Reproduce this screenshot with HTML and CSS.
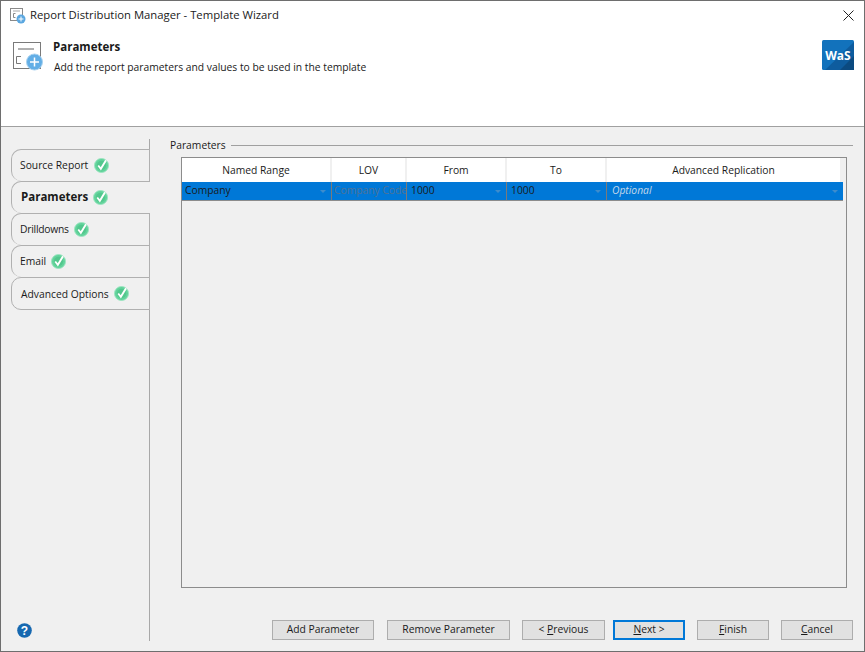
FILE: index.html
```html
<!DOCTYPE html>
<html lang="en">
<head>
<meta charset="utf-8">
<title>Report Distribution Manager - Template Wizard</title>
<link rel="stylesheet" href="styles.css">
</head>
<body>
<div class="window">
  <div class="titlebar">
    <svg class="app-icon" width="16" height="16" viewBox="0 0 16 16">
      <rect x="0.5" y="0.5" width="12" height="12" fill="#fff" stroke="#8a8a8a"/>
      <path d="M3 3h7" stroke="#a8a8a8"/>
      <path d="M5.5 5.5h-2v4h2" fill="none" stroke="#8a8a8a"/>
      <circle cx="11" cy="11" r="4.5" fill="#5ba7e0"/>
      <path d="M11 8.5v5M8.5 11h5" stroke="#fff"/>
    </svg>
    <span class="title">Report Distribution Manager - Template Wizard</span>
    <svg class="close" width="11" height="11" viewBox="0 0 11 11"><path d="M0.5 0.5l10 10M10.500 0.5l-10 10" stroke="#222" stroke-width="1"/></svg>
  </div>
  <div class="header">
    <svg class="head-icon" width="31" height="29" viewBox="0 0 31 29">
      <rect x="0.5" y="0.5" width="27" height="26" fill="#fff" stroke="#7a7a7a"/>
      <path d="M5 7h16" stroke="#b0b0b0" stroke-width="2"/>
      <path d="M8 14.500h-4.500v7h4.500" fill="none" stroke="#777"/>
      <circle cx="21.500" cy="20" r="8" fill="#62aee6" stroke="#a9d2f0"/>
      <path d="M21.500 15.500v9M17 20h9" stroke="#fff" stroke-width="1.500"/>
    </svg>
    <div class="head-text">
      <div class="head-title">Parameters</div>
      <div class="head-sub">Add the report parameters and values to be used in the template</div>
    </div>
    <svg class="logo" width="32" height="30" viewBox="0 0 32 30">
      <rect width="32" height="30" rx="1.500" fill="#1272bc"/>
      <path d="M32 2V30H3Z" fill="#0e5c9e"/>
      <path d="M32 16V30H18Z" fill="#0b4a80"/>
      <text x="16" y="20" class="logo-text" text-anchor="middle">WaS</text>
    </svg>
  </div>
  <div class="main">
    <div class="sidebar">
      <div class="tabs">
        <div class="tab"><span>Source Report</span><svg class="check" viewBox="0 0 16 16"><use href="#ok"/></svg></div>
        <div class="tab active"><span>Parameters</span><svg class="check" viewBox="0 0 16 16"><use href="#ok"/></svg></div>
        <div class="tab"><span>Drilldowns</span><svg class="check" viewBox="0 0 16 16"><use href="#ok"/></svg></div>
        <div class="tab"><span>Email</span><svg class="check" viewBox="0 0 16 16"><use href="#ok"/></svg></div>
        <div class="tab"><span>Advanced Options</span><svg class="check" viewBox="0 0 16 16"><use href="#ok"/></svg></div>
      </div>
      <svg class="help" width="15" height="15" viewBox="0 0 15 15">
        <circle cx="7.500" cy="7.500" r="7.300" fill="#1668b0"/>
        <text x="7.500" y="11.700" class="help-mark" text-anchor="middle">?</text>
      </svg>
    </div>
    <div class="content">
      <div class="legend"><span>Parameters</span><i class="legend-line"></i></div>
      <div class="grid">
        <div class="row head">
          <div class="cell c1">Named Range</div>
          <div class="cell c2">LOV</div>
          <div class="cell c3">From</div>
          <div class="cell c4">To</div>
          <div class="cell c5">Advanced Replication</div>
        </div>
        <div class="row sel">
          <div class="cell c1"><span>Company</span><b class="arrow"></b></div>
          <div class="cell c2 muted"><span>Company Code</span></div>
          <div class="cell c3"><span>1000</span><b class="arrow"></b></div>
          <div class="cell c4"><span>1000</span><b class="arrow"></b></div>
          <div class="cell c5 opt"><span>Optional</span><b class="arrow"></b></div>
        </div>
      </div>
      <div class="buttons">
        <button class="btn b-add">Add Parameter</button>
        <button class="btn b-rem">Remove Parameter</button>
        <button class="btn b-prev">&lt; <u>P</u>revious</button>
        <button class="btn b-next"><u>N</u>ext &gt;</button>
        <button class="btn b-fin"><u>F</u>inish</button>
        <button class="btn b-can"><u>C</u>ancel</button>
      </div>
    </div>
  </div>
</div>
<svg class="defs" width="0" height="0">
  <defs>
    <g id="ok">
      <circle cx="8" cy="8" r="7.500" fill="#62d39b" stroke="#9be4c0"/>
      <circle cx="8" cy="8" r="5" fill="#52c78d"/>
      <path d="M4.500 8l2.800 3.500L12.800 2.500" fill="none" stroke="#fff" stroke-width="2"/>
    </g>
  </defs>
</svg>
</body>
</html>
```
FILE: styles.css
```css
* { box-sizing: border-box; }
html, body { margin: 0; padding: 0; }
body {
  width: 865px;
  height: 652px;
  overflow: hidden;
  font-family: "Open Sans", "Noto Sans", sans-serif;
  font-size: 10.3px;
  color: #1a1a1a;
}
.defs { position: absolute; }
.window {
  width: 865px;
  height: 652px;
  border: 1px solid #6e6e6e;
  background: #f0f0f0;
  display: flex;
  flex-direction: column;
}
.titlebar {
  height: 29px;
  flex: none;
  background: #fff;
  display: flex;
  align-items: center;
  padding: 0 10px 2px 9px;
}
.app-icon { margin-right: 4px; margin-top: 3px; }
.title { font-size: 11.3px; flex: 1; }
.close { margin-top: 1px; }
.header {
  height: 97px;
  flex: none;
  background: #fff;
  border-bottom: 1px solid #a0a0a0;
  display: flex;
  align-items: flex-start;
  padding: 11px 10px 0 12px;
}
.head-icon { margin-top: 1px; }
.head-text { flex: 1; margin-left: 9px; margin-top: -2px; }
.head-title { font-weight: 700; font-size: 11.5px; line-height: 15px; }
.head-sub { line-height: 15px; margin-top: 6px; margin-left: 1px; }
.logo { margin-top: -1px; }
.logo-text { font-family: "Open Sans", sans-serif; font-weight: 700; font-size: 12px; fill: #fff; }
.main { flex: 1; display: flex; min-height: 0; }
.sidebar {
  width: 149px;
  flex: none;
  margin: 12px 0 10px;
  border-right: 1px solid #a8a8a8;
  display: flex;
  flex-direction: column;
  padding: 10px 0 0 10px;
  position: relative;
}
.tabs { flex: 1; }
.tab {
  height: 32px;
  margin-right: -1px;
  width: 139px;
  border: 1px solid #b0b0b0;
  border-bottom: 0;
  border-radius: 10px 0 0 10px;
  display: flex;
  align-items: center;
  gap: 5px;
  padding: 0 0 0 8px;
  background: #f0f0f0;
  position: relative;
}
.tab span { margin-top: -2px; }
.tab:nth-child(1) { gap: 6px; }
.tab:nth-child(3) span { letter-spacing: -0.25px; }
.tab:nth-child(5) { border-bottom: 1px solid #b0b0b0; height: 33px; }
.tab:nth-child(5) span { margin-top: 0; }
.tab:nth-child(2), .tab:nth-child(5) { padding-left: 9px; }
.tab.active {
  border-right: 0;
  font-weight: 700;
  font-size: 11.5px;
  z-index: 1;
}
.check { width: 15px; height: 15px; }
.help { margin: 0 0 3px 6px; flex: none; }
.help-mark { font-family: "Liberation Sans", sans-serif; font-weight: 700; font-size: 12px; fill: #fff; }
.content {
  flex: 1;
  min-width: 0;
  display: flex;
  flex-direction: column;
  padding: 10px 11px 0 20px;
}
.legend { display: flex; align-items: center; height: 15px; gap: 5px; }
.legend-line { flex: 1; border-top: 1px solid #a0a0a0; margin-top: 2px; }
.grid {
  margin: 5px 6px 0 11px;
  height: 431px;
  flex: none;
  border: 1px solid #8c8c8c;
  background: #f0f0f0;
}
.row { display: flex; width: 661px; }
.head { height: 24px; background: #fff; width: 660px; }
.head .cell { justify-content: center; border-right: 2px solid #f0f0f0; }
.sel { height: 19px; background: #0078d7; border-bottom: 1px solid #8c8c8c; }
.cell { display: flex; align-items: center; white-space: nowrap; overflow: hidden; position: relative; flex: none; }
.sel .cell { border-right: 1px solid #7a7a7a; padding: 0 0 2px 3px; }
.sel .cell:last-child { border-right: 0; }
.c1 { width: 150px; }
.c2 { width: 75px; }
.c3 { width: 100px; }
.c4 { width: 100px; }
.c5 { flex: 1; }
.sel .c2 { padding-left: 2px; }
.sel .c3, .sel .c4 { padding-left: 4px; }
.muted { color: #4f7396; }
.sel .opt { color: #c4d8ea; font-style: italic; padding-left: 5px; }
.arrow {
  position: absolute;
  right: 5px;
  top: 8px;
  border-left: 3px solid transparent;
  border-right: 3px solid transparent;
  border-top: 3px solid #3e8ccc;
}
.buttons {
  margin-top: 32px;
  display: flex;
  justify-content: flex-end;
}
.btn {
  height: 20px;
  padding: 0 0 2px;
  font: inherit;
  color: #1a1a1a;
  background: #e1e1e1;
  border: 1px solid #adadad;
}
.b-add { width: 102px; }
.b-rem { width: 123px; margin-left: 13px; }
.b-prev { width: 83px; margin-left: 12px; }
.b-next { width: 72px; margin-left: 8px; border: 2px solid #0078d7; }
.b-fin { width: 72px; margin-left: 12px; }
.b-can { width: 72px; margin-left: 12px; }
```
